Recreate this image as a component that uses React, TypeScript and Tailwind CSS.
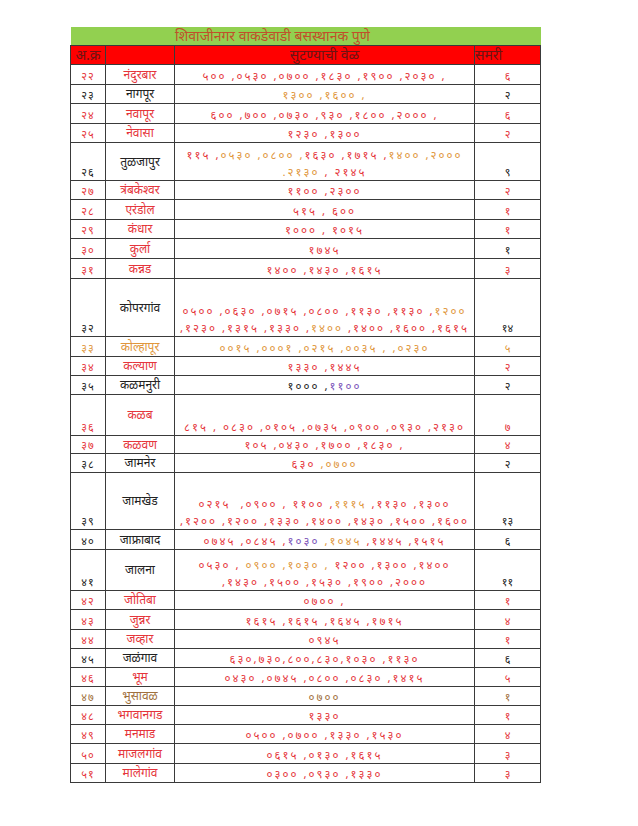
const R = "text-[#e5353b]";
const O = "text-[#e0963c]";
const K = "text-[#222222]";
const P = "text-[#7a52b8]";
const B = "text-[#a0703c]";

type Seg = [string, string];
type Row = {
  no: string;
  name: string;
  nc: string;
  times: Seg[][];
  count: string;
  cc: string;
  h: string;
};

const rows: Row[] = [
  { no: "२२", name: "नंदुरबार", nc: R, times: [[["५०० ,०५३० ,०७०० ,१८३० ,१९०० ,२०३० ,", R]]], count: "६", cc: R, h: "h-[20px]" },
  { no: "२३", name: "नागपूर", nc: K, times: [[["१३०० ,१६०० ,", O]]], count: "२", cc: K, h: "h-[19px]" },
  { no: "२४", name: "नवापूर", nc: R, times: [[["६०० ,७०० ,०७३० ,९३० ,१८०० ,२००० ,", R]]], count: "६", cc: R, h: "h-[20px]" },
  { no: "२५", name: "नेवासा", nc: R, times: [[["१२३० ,१३००", R]]], count: "२", cc: R, h: "h-[19px]" },
  {
    no: "२६", name: "तुळजापुर", nc: K,
    times: [
      [["११५ ,", R], ["०५३० ,०८०० ,", O], ["१६३० ,१७१५ ,", R], ["१४०० ,२०००", O]],
      [[".२१३० ", O], [", २१४५", R]],
    ],
    count: "९", cc: K, h: "h-[38px]",
  },
  { no: "२७", name: "त्रंबकेश्वर", nc: R, times: [[["११०० ,२३००", R]]], count: "२", cc: R, h: "h-[19px]" },
  { no: "२८", name: "एरंडोल", nc: R, times: [[["५१५ , ६००", R]]], count: "१", cc: R, h: "h-[20px]" },
  { no: "२९", name: "कंधार", nc: R, times: [[["१००० , १०१५", R]]], count: "१", cc: R, h: "h-[19px]" },
  { no: "३०", name: "कुर्ला", nc: R, times: [[["१७४५", R]]], count: "१", cc: K, h: "h-[20px]" },
  { no: "३१", name: "कन्नड", nc: R, times: [[["१४०० ,१४३० ,१६१५", R]]], count: "३", cc: R, h: "h-[20px]" },
  {
    no: "३२", name: "कोपरगांव", nc: K,
    times: [
      [["०५०० ,०६३० ,०७१५ ,०८०० ,११३० ,११३० ,", R], ["१२००", O]],
      [[",१२३० ,१३१५ ,१३३० ,", R], ["१४००", O], [" ,१४०० ,१६०० ,१६१५", R]],
    ],
    count: "१४", cc: K, h: "h-[58px]",
  },
  { no: "३३", name: "कोल्हापूर", nc: O, times: [[["००१५ ,०००१ ,०२१५ ,००३५ , ,०२३०", O]]], count: "५", cc: O, h: "h-[20px]" },
  { no: "३४", name: "कल्याण", nc: R, times: [[["१३३० ,१४४५", R]]], count: "२", cc: R, h: "h-[19px]" },
  { no: "३५", name: "कळमनुरी", nc: K, times: [[["१००० ,", K], ["११००", P]]], count: "२", cc: K, h: "h-[19px]" },
  { no: "३६", name: "कळब", nc: R, times: [[["८१५ , ०८३० ,०१०५ ,०७३५ ,०९०० ,०९३० ,२१३०", R]]], count: "७", cc: R, h: "h-[41px]" },
  { no: "३७", name: "कळवण", nc: R, times: [[["१०५ ,०४३० ,१७०० ,१८३० ,", R]]], count: "४", cc: R, h: "h-[18px]" },
  { no: "३८", name: "जामनेर", nc: K, times: [[["६३० ", R], [",०७००", O]]], count: "२", cc: K, h: "h-[19px]" },
  {
    no: "३९", name: "जामखेड", nc: K,
    times: [
      [["०२१५  ,०९०० , ११०० ,", R], ["१११५", O], [" ,११३० ,१३००", R]],
      [[",१२०० ,१२०० ,१३३० ,१४०० ,१४३० ,१५०० ,१६००", R]],
    ],
    count: "१३", cc: K, h: "h-[57px]",
  },
  {
    no: "४०", name: "जाफ्राबाद", nc: K,
    times: [[["०७४५ ,०८४५ ,", R], ["१०३०", P], [" ,१०४५", O], [" ,१४४५ ,१५१५", R]]],
    count: "६", cc: K, h: "h-[20px]",
  },
  {
    no: "४१", name: "जालना", nc: K,
    times: [
      [["०५३० , ", R], ["०९०० ,१०३० , ", O], ["१२०० ,१३०० ,१४००", R]],
      [[",१४३० ,१५०० ,१५३० ,१९०० ,२०००", R]],
    ],
    count: "११", cc: K, h: "h-[41px]",
  },
  { no: "४२", name: "जोतिबा", nc: R, times: [[["०७०० ,", R]]], count: "१", cc: R, h: "h-[19px]" },
  { no: "४३", name: "जुन्नर", nc: R, times: [[["१६१५ ,१६१५ ,१६४५ ,१७१५", R]]], count: "४", cc: R, h: "h-[20px]" },
  { no: "४४", name: "जव्हार", nc: R, times: [[["०९४५", R]]], count: "१", cc: R, h: "h-[19px]" },
  { no: "४५", name: "जळंगाव", nc: K, times: [[["६३०,७३०,८००,८३०,१०३० ,११३०", R]]], count: "६", cc: K, h: "h-[19px]" },
  { no: "४६", name: "भूम", nc: R, times: [[["०४३० ,०७४५ ,०८०० ,०८३० ,१४१५", R]]], count: "५", cc: R, h: "h-[19px]" },
  { no: "४७", name: "भुसावळ", nc: B, times: [[["०७००", B]]], count: "१", cc: B, h: "h-[19px]" },
  { no: "४८", name: "भगवानगड", nc: R, times: [[["१३३०", R]]], count: "१", cc: R, h: "h-[19px]" },
  { no: "४९", name: "मनमाड", nc: R, times: [[["०५०० ,०७०० ,१३३० ,१५३०", R]]], count: "४", cc: R, h: "h-[19px]" },
  { no: "५०", name: "माजलगांव", nc: R, times: [[["०६१५ ,०१३० ,१६१५", R]]], count: "३", cc: R, h: "h-[20px]" },
  { no: "५१", name: "मालेगांव", nc: R, times: [[["०३०० ,०९३० ,१३३०", R]]], count: "३", cc: R, h: "h-[19px]" },
];

const cell = "border border-[#3a3a3a] p-0 leading-[16px]";

export default function App() {
  return (
    <div className="w-[638px] h-[826px] bg-white pt-[27px] pl-[70px] font-['Noto_Sans','DejaVu_Sans',sans-serif]">
      <table className="w-[470px] border-collapse table-fixed">
        <colgroup>
          <col className="w-[35px]" />
          <col className="w-[69px]" />
          <col className="w-[300px]" />
          <col className="w-[66px]" />
        </colgroup>
        <tbody>
          <tr className="h-[18px] bg-[#92d050]">
            <td colSpan={3} className="p-0 text-center text-[14px] leading-[18px] text-[#c0502a]">
              शिवाजीनगर वाकडेवाडी बसस्थानक पुणे
            </td>
            <td className="p-0"></td>
          </tr>
          <tr className="h-[19px] bg-[#ff0000] text-[14px] text-[#6b1414]">
            <td className={`${cell} text-center`}>अ.क्र</td>
            <td className={cell}></td>
            <td className={`${cell} text-center`}>सुटण्याची वेळ</td>
            <td className={`${cell} text-left`}>समरी</td>
          </tr>
          {rows.map((r) => (
            <tr key={r.no} className={r.h}>
              <td className={`${cell} ${r.nc} align-bottom text-center text-[11px] tracking-[1px]`}>{r.no}</td>
              <td className={`${cell} ${r.nc} align-middle text-center text-[12px]`}>{r.name}</td>
              <td className={`${cell} align-bottom text-center text-[11.5px] tracking-[2px] whitespace-pre`}>
                {r.times.map((line, i) => (
                  <div key={i} className="leading-[17px]">
                    {line.map(([t, c], j) => (
                      <span key={j} className={c}>
                        {t}
                      </span>
                    ))}
                  </div>
                ))}
              </td>
              <td className={`${cell} ${r.cc} align-bottom text-center text-[11px]`}>{r.count}</td>
            </tr>
          ))}
        </tbody>
      </table>
    </div>
  );
}
